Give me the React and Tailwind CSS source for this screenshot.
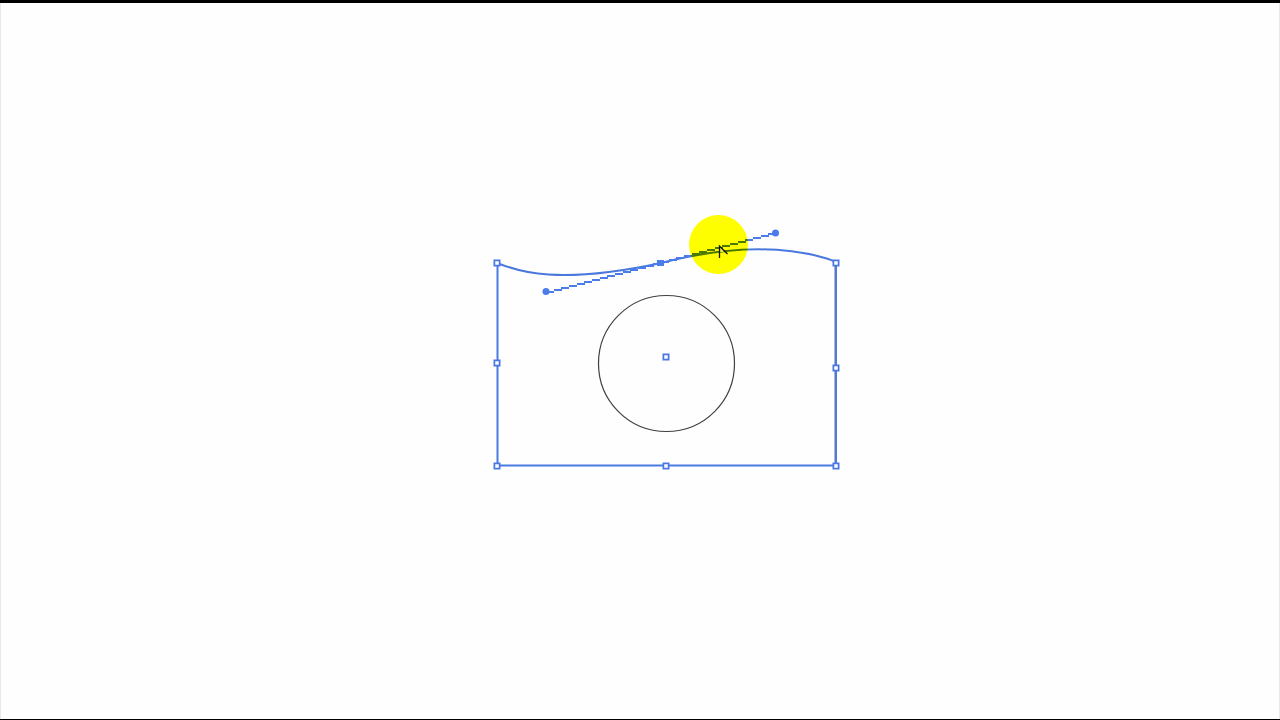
const corners = [
  { x: 497, y: 263 },
  { x: 836, y: 263 },
  { x: 836, y: 466 },
  { x: 497, y: 466 },
];

const widgets = [
  { x: 497, y: 363 },
  { x: 836, y: 368 },
  { x: 666, y: 466 },
  { x: 666, y: 357 },
];

// the direction line is drawn as short level runs, one pixel row pair at a time
const handleSteps = Array.from({ length: 30 }, (_, i) => {
  const x = Math.round(546 + (i * 230) / 30);
  const y = 292 - i * 2;
  return `M${x} ${y}h8`;
}).join("");

function AnchorPoint({ x, y }) {
  return (
    <>
      <rect x={x - 3.5} y={y - 3.5} width="7" height="7" className="fill-[#4a78e2]" />
      <rect x={x - 1.75} y={y - 1.75} width="3.5" height="3.5" className="fill-white" />
    </>
  );
}

export default function App() {
  return (
    <main className="flex h-screen w-full flex-col overflow-hidden border-t-[3px] border-b border-black bg-[#fefefe]">
      <div className="min-h-0 flex-1 border-x border-[#e9e9e9]">
        <svg
          viewBox="1 3 1278 716"
          className="block h-full w-full fill-none"
          role="img"
          aria-label="Path editing canvas"
        >
          {/* lens */}
          <circle cx="666.5" cy="363.5" r="68" className="stroke-[#404040] stroke-[1.2]" />

          {/* body outline */}
          <path d="M834.5 263V465" className="stroke-[#b4b8c4] stroke-1" />
          <path d="M497.5 263V465.5H836V263" className="stroke-[#4a7be4] stroke-2" />
          <path
            d="M497 263C510 267 545 288 661 263C776 233 836 262 836 262"
            className="stroke-[#4a78dc] stroke-2"
          />

          {/* direction handles */}
          <path d={handleSteps} className="stroke-[#4b7cec] stroke-2" />
          <circle cx="546" cy="291.5" r="3.5" className="fill-[#4b7cec]" />
          <circle cx="775.5" cy="233" r="3.5" className="fill-[#4b7cec]" />
          <rect x="657" y="260" width="7" height="6" className="fill-[#4b7cec]" />

          {/* click highlight */}
          <circle cx="718.5" cy="244.5" r="29.5" className="fill-[#ffff00] mix-blend-multiply" />

          {corners.map((p) => (
            <AnchorPoint key={`${p.x}-${p.y}`} {...p} />
          ))}
          {widgets.map((p) => (
            <AnchorPoint key={`${p.x}-${p.y}`} {...p} />
          ))}

          {/* cursor */}
          <path d="M720 246.5V252H724Z" className="fill-[#e8e850]" />
          <path d="M719.5 258V246L727.5 254" className="stroke-[#141400] stroke-[1.3]" />
        </svg>
      </div>
    </main>
  );
}
